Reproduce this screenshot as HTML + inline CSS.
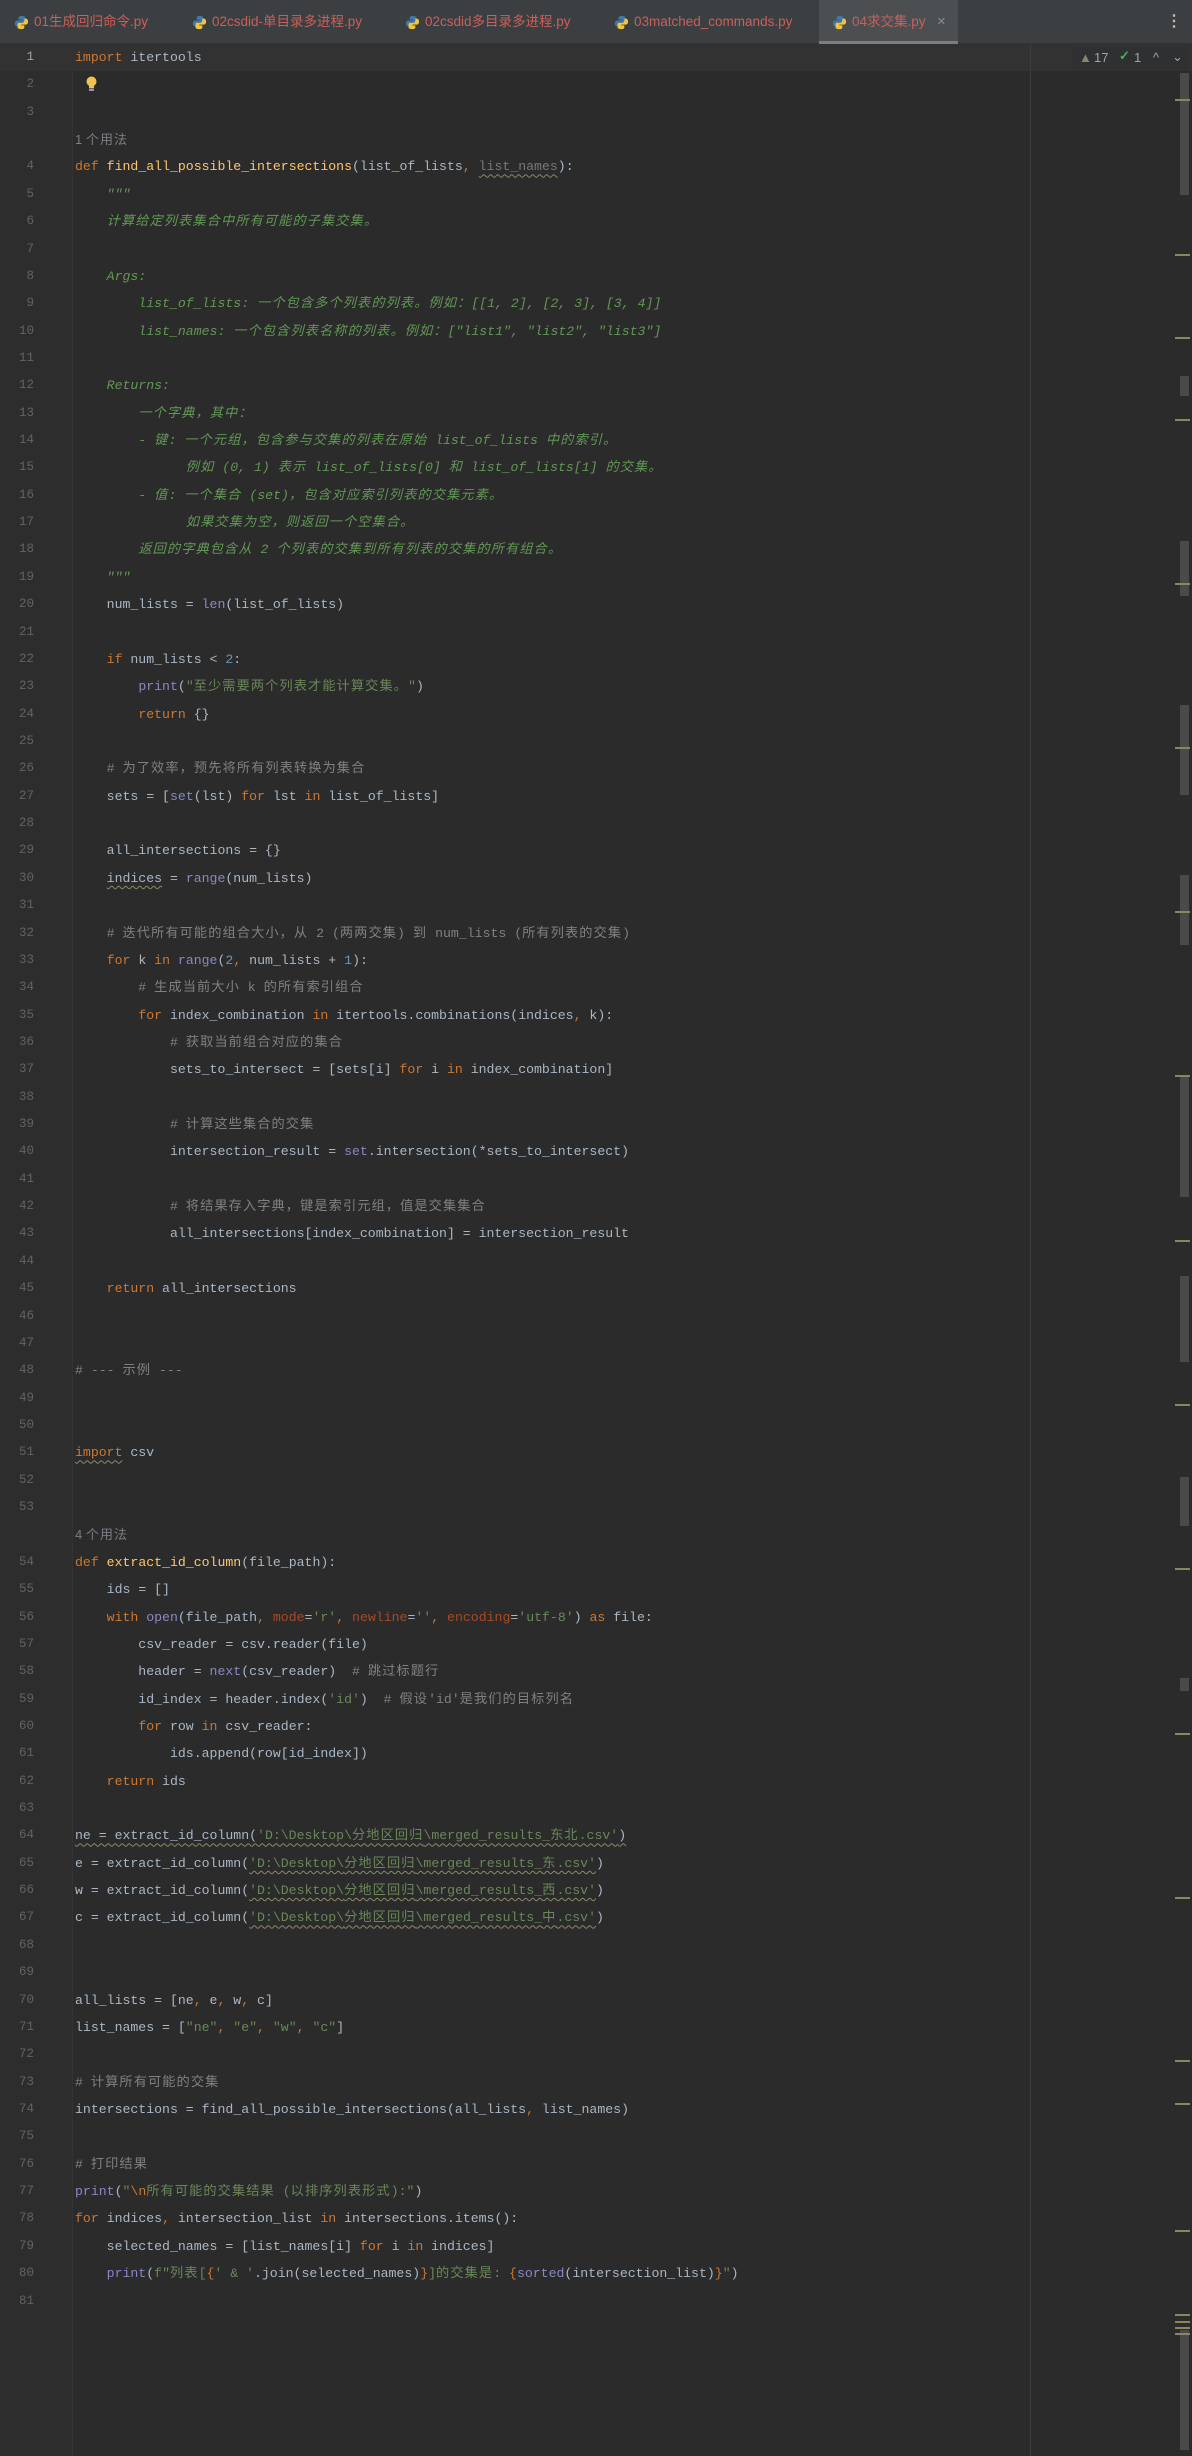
<!DOCTYPE html>
<html><head><meta charset="utf-8">
<style>
*{margin:0;padding:0;box-sizing:border-box}
html,body{width:1192px;height:2456px;background:#2b2b2b;overflow:hidden}
body{position:relative;font-family:"Liberation Mono","Noto Sans CJK SC",monospace}
#tabs{position:absolute;left:0;top:0;width:1192px;height:44px;background:#3c3f41;border-bottom:1px solid #323232;font-family:"Liberation Sans","Noto Sans CJK SC",sans-serif;font-size:13.5px;color:#c9605a}
.tab{position:absolute;top:0;height:44px;line-height:44px;white-space:nowrap}
.tab svg{position:absolute;left:0;top:15px}
.tab span{position:absolute;left:20px;top:0}
#act{position:absolute;left:819px;top:0;width:139px;height:44px;background:#4b4f52;border-bottom:3px solid #7a7e82}
#gut{position:absolute;left:0;top:44px;width:73px;height:2412px;background:#2d2d2d;border-right:1px solid #333}
#cur{position:absolute;left:0;top:44px;width:1192px;height:27.36px;background:#323232}
#margin{position:absolute;left:1030px;top:44px;width:1px;height:2412px;background:#3d3d3d}
.row{position:absolute;left:0;height:27.36px;line-height:27.36px;width:1030px;white-space:pre;font-size:13.2px;color:#a9b7c6}
.ln{position:absolute;left:0;width:34px;text-align:right;color:#606366;font-size:12.5px}
.cd{position:absolute;left:75px}
.k{color:#cc7832}.s{color:#6a8759}.c{color:#808080}.d{color:#629755;font-style:italic}
.b{color:#8888c6}.n{color:#6897bb}.f{color:#ffc66d}.p{color:#aa4926}.h{color:#7a7e85;font-family:"Liberation Sans","Noto Sans CJK SC",sans-serif;font-size:13px}
.g{color:#787878}
.z{letter-spacing:1.1px}
.w{text-decoration:underline wavy #8a8a6a;text-underline-offset:3px;text-decoration-thickness:1px}
.sb{position:absolute;left:1180px;width:9px;background:#4a4a4a}
.mk{position:absolute;left:1175px;width:15px;height:2px;background:#8d8460}
#widget{position:absolute;left:1073px;top:47px;width:116px;height:23px;background:#2e3032;font-family:"Liberation Sans",sans-serif;font-size:13px;color:#a0a4a8}
</style></head><body>
<div id="tabs">
<div class="tab" style="left:14px"><svg width="15" height="15" viewBox="0 0 16 16"><path d="M8 1C5 1 5 2.3 5 3v2h3.2v.8H3.5C2 5.8 1 7 1 9s1 3.2 2.5 3.2H5V10c0-1.2 1-2.2 2.2-2.2h3.4c1 0 1.6-.8 1.6-1.7V3c0-1-1-2-4.2-2z" fill="#3d78b0"/><path d="M8 15c3 0 3-1.3 3-2v-2H7.8v-.8h4.7C14 10.2 15 9 15 7s-1-3.2-2.5-3.2H11V6c0 1.2-1 2.2-2.2 2.2H5.4c-1 0-1.6.8-1.6 1.7V13c0 1 1 2 4.2 2z" fill="#f2c53d"/></svg><span>01生成回归命令.py</span></div>
<div class="tab" style="left:192px"><svg width="15" height="15" viewBox="0 0 16 16"><path d="M8 1C5 1 5 2.3 5 3v2h3.2v.8H3.5C2 5.8 1 7 1 9s1 3.2 2.5 3.2H5V10c0-1.2 1-2.2 2.2-2.2h3.4c1 0 1.6-.8 1.6-1.7V3c0-1-1-2-4.2-2z" fill="#3d78b0"/><path d="M8 15c3 0 3-1.3 3-2v-2H7.8v-.8h4.7C14 10.2 15 9 15 7s-1-3.2-2.5-3.2H11V6c0 1.2-1 2.2-2.2 2.2H5.4c-1 0-1.6.8-1.6 1.7V13c0 1 1 2 4.2 2z" fill="#f2c53d"/></svg><span>02csdid-单目录多进程.py</span></div>
<div class="tab" style="left:405px"><svg width="15" height="15" viewBox="0 0 16 16"><path d="M8 1C5 1 5 2.3 5 3v2h3.2v.8H3.5C2 5.8 1 7 1 9s1 3.2 2.5 3.2H5V10c0-1.2 1-2.2 2.2-2.2h3.4c1 0 1.6-.8 1.6-1.7V3c0-1-1-2-4.2-2z" fill="#3d78b0"/><path d="M8 15c3 0 3-1.3 3-2v-2H7.8v-.8h4.7C14 10.2 15 9 15 7s-1-3.2-2.5-3.2H11V6c0 1.2-1 2.2-2.2 2.2H5.4c-1 0-1.6.8-1.6 1.7V13c0 1 1 2 4.2 2z" fill="#f2c53d"/></svg><span>02csdid多目录多进程.py</span></div>
<div class="tab" style="left:614px"><svg width="15" height="15" viewBox="0 0 16 16"><path d="M8 1C5 1 5 2.3 5 3v2h3.2v.8H3.5C2 5.8 1 7 1 9s1 3.2 2.5 3.2H5V10c0-1.2 1-2.2 2.2-2.2h3.4c1 0 1.6-.8 1.6-1.7V3c0-1-1-2-4.2-2z" fill="#3d78b0"/><path d="M8 15c3 0 3-1.3 3-2v-2H7.8v-.8h4.7C14 10.2 15 9 15 7s-1-3.2-2.5-3.2H11V6c0 1.2-1 2.2-2.2 2.2H5.4c-1 0-1.6.8-1.6 1.7V13c0 1 1 2 4.2 2z" fill="#f2c53d"/></svg><span>03matched_commands.py</span></div>
<div id="act"></div>
<div class="tab" style="left:832px"><svg width="15" height="15" viewBox="0 0 16 16"><path d="M8 1C5 1 5 2.3 5 3v2h3.2v.8H3.5C2 5.8 1 7 1 9s1 3.2 2.5 3.2H5V10c0-1.2 1-2.2 2.2-2.2h3.4c1 0 1.6-.8 1.6-1.7V3c0-1-1-2-4.2-2z" fill="#3d78b0"/><path d="M8 15c3 0 3-1.3 3-2v-2H7.8v-.8h4.7C14 10.2 15 9 15 7s-1-3.2-2.5-3.2H11V6c0 1.2-1 2.2-2.2 2.2H5.4c-1 0-1.6.8-1.6 1.7V13c0 1 1 2 4.2 2z" fill="#f2c53d"/></svg><span>04求交集.py</span></div>
<div class="tab" style="left:937px;color:#8a8d90;font-size:15px">×</div>
<div class="tab" style="left:1166px;color:#bbb;font-size:16px;font-weight:bold">⋮</div>
</div>
<div id="gut"></div>
<div id="cur"></div>
<div id="margin"></div>
<svg style="position:absolute;left:86px;top:76px" width="11" height="16" viewBox="0 0 11 16"><circle cx="5.5" cy="5.5" r="5" fill="#f0c350"/><rect x="3" y="9" width="5" height="3" fill="#f0c350"/><rect x="3" y="12.5" width="5" height="2.5" fill="#999"/></svg>
<div id="widget"><span style="position:absolute;left:6px;top:3px;color:#8a8470">▲</span><span style="position:absolute;left:21px;top:3px">17</span><span style="position:absolute;left:46px;top:1px;color:#4caf50;font-weight:bold">✓</span><span style="position:absolute;left:61px;top:3px">1</span><span style="position:absolute;left:80px;top:3px">^</span><span style="position:absolute;left:99px;top:2px">⌄</span></div>

<div class="sb" style="top:73px;height:122px"></div>
<div class="sb" style="top:376px;height:20px"></div>
<div class="sb" style="top:541px;height:55px"></div>
<div class="sb" style="top:705px;height:90px"></div>
<div class="sb" style="top:875px;height:70px"></div>
<div class="sb" style="top:1076px;height:121px"></div>
<div class="sb" style="top:1276px;height:86px"></div>
<div class="sb" style="top:1477px;height:49px"></div>
<div class="sb" style="top:1678px;height:13px"></div>
<div class="sb" style="top:2330px;height:120px"></div>
<div class="mk" style="top:99px"></div><div class="mk" style="top:254px"></div><div class="mk" style="top:337px"></div><div class="mk" style="top:419px"></div><div class="mk" style="top:583px"></div><div class="mk" style="top:747px"></div><div class="mk" style="top:911px"></div><div class="mk" style="top:1075px"></div><div class="mk" style="top:1240px"></div><div class="mk" style="top:1404px"></div><div class="mk" style="top:1568px"></div><div class="mk" style="top:1733px"></div><div class="mk" style="top:1897px"></div><div class="mk" style="top:2060px"></div><div class="mk" style="top:2103px"></div><div class="mk" style="top:2230px"></div><div class="mk" style="top:2314px"></div><div class="mk" style="top:2321px"></div><div class="mk" style="top:2327px"></div><div class="mk" style="top:2333px"></div>

<div id="code">
<div class="row" style="top:44.00px"><span class="ln" style="color:#a4a3a3">1</span><span class="cd"><span class="k">import</span> itertools</span></div>
<div class="row" style="top:71.36px"><span class="ln">2</span><span class="cd"></span></div>
<div class="row" style="top:98.72px"><span class="ln">3</span><span class="cd"></span></div>
<div class="row" style="top:126.08px"><span class="cd h">1 个用法</span></div>
<div class="row" style="top:153.44px"><span class="ln">4</span><span class="cd"><span class="k">def</span> <span class="f">find_all_possible_intersections</span>(list_of_lists<span class="k">,</span> <span class="w g">list_names</span>):</span></div>
<div class="row" style="top:180.80px"><span class="ln">5</span><span class="cd d">    """</span></div>
<div class="row" style="top:208.16px"><span class="ln">6</span><span class="cd d">    计算给定列表集合中所有可能的子集交集。</span></div>
<div class="row" style="top:235.52px"><span class="ln">7</span><span class="cd"></span></div>
<div class="row" style="top:262.88px"><span class="ln">8</span><span class="cd d">    Args:</span></div>
<div class="row" style="top:290.24px"><span class="ln">9</span><span class="cd d">        list_of_lists: 一个包含多个列表的列表。例如：[[1, 2], [2, 3], [3, 4]]</span></div>
<div class="row" style="top:317.60px"><span class="ln">10</span><span class="cd d">        list_names: 一个包含列表名称的列表。例如：["list1", "list2", "list3"]</span></div>
<div class="row" style="top:344.96px"><span class="ln">11</span><span class="cd"></span></div>
<div class="row" style="top:372.32px"><span class="ln">12</span><span class="cd d">    Returns:</span></div>
<div class="row" style="top:399.68px"><span class="ln">13</span><span class="cd d">        一个字典，其中：</span></div>
<div class="row" style="top:427.04px"><span class="ln">14</span><span class="cd d">        - 键: 一个元组，包含参与交集的列表在原始 list_of_lists 中的索引。</span></div>
<div class="row" style="top:454.40px"><span class="ln">15</span><span class="cd d">              例如 (0, 1) 表示 list_of_lists[0] 和 list_of_lists[1] 的交集。</span></div>
<div class="row" style="top:481.76px"><span class="ln">16</span><span class="cd d">        - 值: 一个集合 (set)，包含对应索引列表的交集元素。</span></div>
<div class="row" style="top:509.12px"><span class="ln">17</span><span class="cd d">              如果交集为空，则返回一个空集合。</span></div>
<div class="row" style="top:536.48px"><span class="ln">18</span><span class="cd d">        返回的字典包含从 2 个列表的交集到所有列表的交集的所有组合。</span></div>
<div class="row" style="top:563.84px"><span class="ln">19</span><span class="cd d">    """</span></div>
<div class="row" style="top:591.20px"><span class="ln">20</span><span class="cd">    num_lists = <span class="b">len</span>(list_of_lists)</span></div>
<div class="row" style="top:618.56px"><span class="ln">21</span><span class="cd"></span></div>
<div class="row" style="top:645.92px"><span class="ln">22</span><span class="cd">    <span class="k">if</span> num_lists &lt; <span class="n">2</span>:</span></div>
<div class="row" style="top:673.28px"><span class="ln">23</span><span class="cd">        <span class="b">print</span>(<span class="s">"至少需要两个列表才能计算交集。"</span>)</span></div>
<div class="row" style="top:700.64px"><span class="ln">24</span><span class="cd">        <span class="k">return</span> {}</span></div>
<div class="row" style="top:728.00px"><span class="ln">25</span><span class="cd"></span></div>
<div class="row" style="top:755.36px"><span class="ln">26</span><span class="cd c">    # 为了效率，预先将所有列表转换为集合</span></div>
<div class="row" style="top:782.72px"><span class="ln">27</span><span class="cd">    sets = [<span class="b">set</span>(lst) <span class="k">for</span> lst <span class="k">in</span> list_of_lists]</span></div>
<div class="row" style="top:810.08px"><span class="ln">28</span><span class="cd"></span></div>
<div class="row" style="top:837.44px"><span class="ln">29</span><span class="cd">    all_intersections = {}</span></div>
<div class="row" style="top:864.80px"><span class="ln">30</span><span class="cd">    <span class="w">indices</span> = <span class="b">range</span>(num_lists)</span></div>
<div class="row" style="top:892.16px"><span class="ln">31</span><span class="cd"></span></div>
<div class="row" style="top:919.52px"><span class="ln">32</span><span class="cd c">    # 迭代所有可能的组合大小，从 2 (两两交集) 到 num_lists (所有列表的交集)</span></div>
<div class="row" style="top:946.88px"><span class="ln">33</span><span class="cd">    <span class="k">for</span> k <span class="k">in</span> <span class="b">range</span>(<span class="n">2</span><span class="k">,</span> num_lists + <span class="n">1</span>):</span></div>
<div class="row" style="top:974.24px"><span class="ln">34</span><span class="cd c">        # 生成当前大小 k 的所有索引组合</span></div>
<div class="row" style="top:1001.60px"><span class="ln">35</span><span class="cd">        <span class="k">for</span> index_combination <span class="k">in</span> itertools.combinations(indices<span class="k">,</span> k):</span></div>
<div class="row" style="top:1028.96px"><span class="ln">36</span><span class="cd c">            # 获取当前组合对应的集合</span></div>
<div class="row" style="top:1056.32px"><span class="ln">37</span><span class="cd">            sets_to_intersect = [sets[i] <span class="k">for</span> i <span class="k">in</span> index_combination]</span></div>
<div class="row" style="top:1083.68px"><span class="ln">38</span><span class="cd"></span></div>
<div class="row" style="top:1111.04px"><span class="ln">39</span><span class="cd c">            # 计算这些集合的交集</span></div>
<div class="row" style="top:1138.40px"><span class="ln">40</span><span class="cd">            intersection_result = <span class="b">set</span>.intersection(*sets_to_intersect)</span></div>
<div class="row" style="top:1165.76px"><span class="ln">41</span><span class="cd"></span></div>
<div class="row" style="top:1193.12px"><span class="ln">42</span><span class="cd c">            # 将结果存入字典，键是索引元组，值是交集集合</span></div>
<div class="row" style="top:1220.48px"><span class="ln">43</span><span class="cd">            all_intersections[index_combination] = intersection_result</span></div>
<div class="row" style="top:1247.84px"><span class="ln">44</span><span class="cd"></span></div>
<div class="row" style="top:1275.20px"><span class="ln">45</span><span class="cd">    <span class="k">return</span> all_intersections</span></div>
<div class="row" style="top:1302.56px"><span class="ln">46</span><span class="cd"></span></div>
<div class="row" style="top:1329.92px"><span class="ln">47</span><span class="cd"></span></div>
<div class="row" style="top:1357.28px"><span class="ln">48</span><span class="cd c"># --- 示例 ---</span></div>
<div class="row" style="top:1384.64px"><span class="ln">49</span><span class="cd"></span></div>
<div class="row" style="top:1412.00px"><span class="ln">50</span><span class="cd"></span></div>
<div class="row" style="top:1439.36px"><span class="ln">51</span><span class="cd"><span class="k w">import</span> csv</span></div>
<div class="row" style="top:1466.72px"><span class="ln">52</span><span class="cd"></span></div>
<div class="row" style="top:1494.08px"><span class="ln">53</span><span class="cd"></span></div>
<div class="row" style="top:1521.44px"><span class="cd h">4 个用法</span></div>
<div class="row" style="top:1548.80px"><span class="ln">54</span><span class="cd"><span class="k">def</span> <span class="f">extract_id_column</span>(file_path):</span></div>
<div class="row" style="top:1576.16px"><span class="ln">55</span><span class="cd">    ids = []</span></div>
<div class="row" style="top:1603.52px"><span class="ln">56</span><span class="cd">    <span class="k">with</span> <span class="b">open</span>(file_path<span class="k">,</span> <span class="p">mode</span>=<span class="s">'r'</span><span class="k">,</span> <span class="p">newline</span>=<span class="s">''</span><span class="k">,</span> <span class="p">encoding</span>=<span class="s">'utf-8'</span>) <span class="k">as</span> file:</span></div>
<div class="row" style="top:1630.88px"><span class="ln">57</span><span class="cd">        csv_reader = csv.reader(file)</span></div>
<div class="row" style="top:1658.24px"><span class="ln">58</span><span class="cd">        header = <span class="b">next</span>(csv_reader)  <span class="c"># 跳过标题行</span></span></div>
<div class="row" style="top:1685.60px"><span class="ln">59</span><span class="cd">        id_index = header.index(<span class="s">'id'</span>)  <span class="c"># 假设'id'是我们的目标列名</span></span></div>
<div class="row" style="top:1712.96px"><span class="ln">60</span><span class="cd">        <span class="k">for</span> row <span class="k">in</span> csv_reader:</span></div>
<div class="row" style="top:1740.32px"><span class="ln">61</span><span class="cd">            ids.append(row[id_index])</span></div>
<div class="row" style="top:1767.68px"><span class="ln">62</span><span class="cd">    <span class="k">return</span> ids</span></div>
<div class="row" style="top:1795.04px"><span class="ln">63</span><span class="cd"></span></div>
<div class="row" style="top:1822.40px"><span class="ln">64</span><span class="cd"><span class="w">ne = extract_id_column(<span class="s">'D:\Desktop\分地区回归\merged_results_东北.csv'</span>)</span></span></div>
<div class="row" style="top:1849.76px"><span class="ln">65</span><span class="cd">e = extract_id_column(<span class="s w">'D:\Desktop\分地区回归\merged_results_东.csv'</span>)</span></div>
<div class="row" style="top:1877.12px"><span class="ln">66</span><span class="cd">w = extract_id_column(<span class="s w">'D:\Desktop\分地区回归\merged_results_西.csv'</span>)</span></div>
<div class="row" style="top:1904.48px"><span class="ln">67</span><span class="cd">c = extract_id_column(<span class="s w">'D:\Desktop\分地区回归\merged_results_中.csv'</span>)</span></div>
<div class="row" style="top:1931.84px"><span class="ln">68</span><span class="cd"></span></div>
<div class="row" style="top:1959.20px"><span class="ln">69</span><span class="cd"></span></div>
<div class="row" style="top:1986.56px"><span class="ln">70</span><span class="cd">all_lists = [ne<span class="k">,</span> e<span class="k">,</span> w<span class="k">,</span> c]</span></div>
<div class="row" style="top:2013.92px"><span class="ln">71</span><span class="cd">list_names = [<span class="s">"ne"</span><span class="k">,</span> <span class="s">"e"</span><span class="k">,</span> <span class="s">"w"</span><span class="k">,</span> <span class="s">"c"</span>]</span></div>
<div class="row" style="top:2041.28px"><span class="ln">72</span><span class="cd"></span></div>
<div class="row" style="top:2068.64px"><span class="ln">73</span><span class="cd c"># 计算所有可能的交集</span></div>
<div class="row" style="top:2096.00px"><span class="ln">74</span><span class="cd">intersections = find_all_possible_intersections(all_lists<span class="k">,</span> list_names)</span></div>
<div class="row" style="top:2123.36px"><span class="ln">75</span><span class="cd"></span></div>
<div class="row" style="top:2150.72px"><span class="ln">76</span><span class="cd c"># 打印结果</span></div>
<div class="row" style="top:2178.08px"><span class="ln">77</span><span class="cd"><span class="b">print</span>(<span class="s">"<span class="k">\n</span>所有可能的交集结果 (以排序列表形式):"</span>)</span></div>
<div class="row" style="top:2205.44px"><span class="ln">78</span><span class="cd"><span class="k">for</span> indices<span class="k">,</span> intersection_list <span class="k">in</span> intersections.items():</span></div>
<div class="row" style="top:2232.80px"><span class="ln">79</span><span class="cd">    selected_names = [list_names[i] <span class="k">for</span> i <span class="k">in</span> indices]</span></div>
<div class="row" style="top:2260.16px"><span class="ln">80</span><span class="cd">    <span class="b">print</span>(<span class="s">f"列表[</span><span class="k">{</span><span class="s">' &amp; '</span>.join(selected_names)<span class="k">}</span><span class="s">]的交集是: </span><span class="k">{</span><span class="b">sorted</span>(intersection_list)<span class="k">}</span><span class="s">"</span>)</span></div>
<div class="row" style="top:2287.52px"><span class="ln">81</span><span class="cd"></span></div>
</div>
<script>
(function(){
var re=/[\u3000-\u303f\u4e00-\u9fff\uff00-\uffef]+/g;
var root=document.getElementById('code');
var w=document.createTreeWalker(root,NodeFilter.SHOW_TEXT,null,false);
var nodes=[],n;while(n=w.nextNode()){if(re.test(n.nodeValue))nodes.push(n);re.lastIndex=0;}
nodes.forEach(function(t){
var s=t.nodeValue,frag=document.createDocumentFragment(),last=0,m;re.lastIndex=0;
while((m=re.exec(s))){
if(m.index>last)frag.appendChild(document.createTextNode(s.slice(last,m.index)));
var sp=document.createElement('span');sp.className='z';sp.textContent=m[0];frag.appendChild(sp);
last=m.index+m[0].length;}
if(last<s.length)frag.appendChild(document.createTextNode(s.slice(last)));
t.parentNode.replaceChild(frag,t);
});
})();
</script>
</body></html>
